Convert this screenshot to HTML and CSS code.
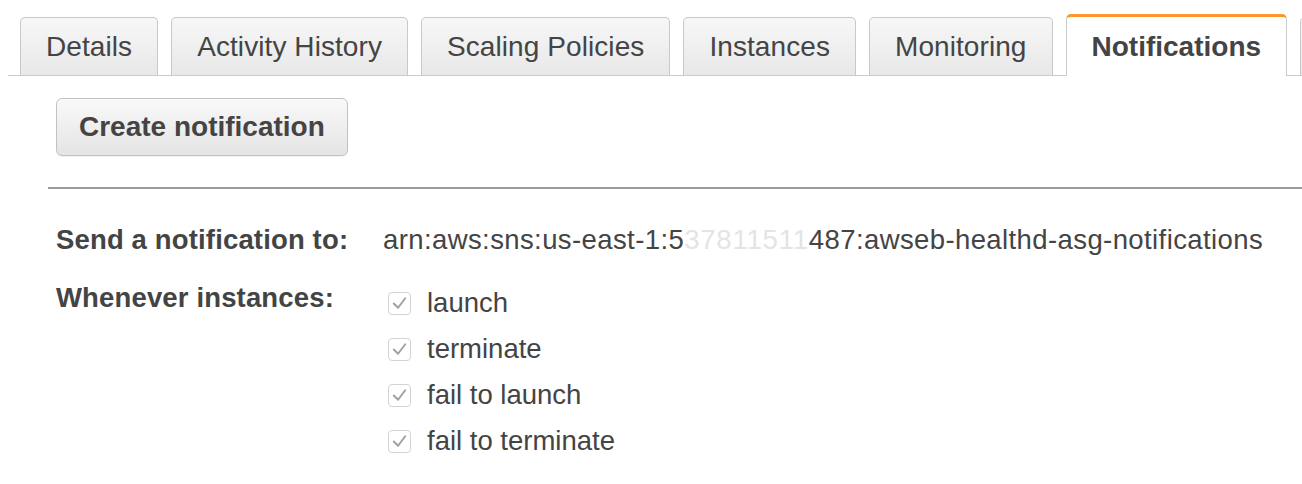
FILE: index.html
```html
<!DOCTYPE html>
<html>
<head>
<meta charset="utf-8">
<link rel="stylesheet" href="styles.css">
</head>
<body>
<div class="tabbar">
  <div class="tab">Details</div>
  <div class="tab">Activity History</div>
  <div class="tab">Scaling Policies</div>
  <div class="tab">Instances</div>
  <div class="tab">Monitoring</div>
  <div class="tab active">Notifications</div>
  <div class="tab stub"></div>
</div>
<div class="content">
  <div class="toolbar">
    <button class="btn">Create notification</button>
  </div>
  <div class="rule"></div>
  <div class="details">
    <div class="label">Send a notification to:</div>
    <div class="value">arn:aws:sns:us-east-1:5<span class="redact">37811511</span>487:awseb-healthd-asg-notifications</div>
    <div class="label">Whenever instances:</div>
    <ul class="checks">
      <li><span class="box"><svg viewBox="0 0 22 22" width="22" height="22"><path d="M5 11.5 L9.5 16 L17 6" fill="none" stroke="#a0a0a0" stroke-width="2" stroke-linecap="round" stroke-linejoin="round"/></svg></span>launch</li>
      <li><span class="box"><svg viewBox="0 0 22 22" width="22" height="22"><path d="M5 11.5 L9.5 16 L17 6" fill="none" stroke="#a0a0a0" stroke-width="2" stroke-linecap="round" stroke-linejoin="round"/></svg></span>terminate</li>
      <li><span class="box"><svg viewBox="0 0 22 22" width="22" height="22"><path d="M5 11.5 L9.5 16 L17 6" fill="none" stroke="#a0a0a0" stroke-width="2" stroke-linecap="round" stroke-linejoin="round"/></svg></span>fail to launch</li>
      <li><span class="box"><svg viewBox="0 0 22 22" width="22" height="22"><path d="M5 11.5 L9.5 16 L17 6" fill="none" stroke="#a0a0a0" stroke-width="2" stroke-linecap="round" stroke-linejoin="round"/></svg></span>fail to terminate</li>
    </ul>
  </div>
</div>
</body>
</html>
```
FILE: styles.css
```css
html, body {
  margin: 0;
  padding: 0;
  overflow: hidden;
  background: #fff;
}
body {
  font-family: "Liberation Sans", Arial, Helvetica, sans-serif;
  color: #444;
}
.tabbar {
  display: flex;
  align-items: flex-end;
  gap: 13px;
  margin: 14px 0 0 8px;
  padding-left: 12px;
  border-bottom: 1px solid #cbcbcb;
}
.tab {
  flex-shrink: 0;
  box-sizing: border-box;
  height: 58px;
  padding: 0 25px;
  display: flex;
  align-items: center;
  font-size: 28px;
  letter-spacing: 0.08px;
  color: #444;
  background: linear-gradient(#f7f7f7, #e8e8e8);
  border: 1px solid #c9c9c9;
  border-bottom: none;
  border-radius: 5px 5px 0 0;
  white-space: nowrap;
}
.tab.active {
  height: 62px;
  margin-bottom: -1px;
  padding-top: 1px;
  background: #fff;
  border-top: 3px solid #f99a26;
  border-left-color: #cbcbcb;
  border-right-color: #cbcbcb;
  font-weight: bold;
  letter-spacing: 0;
}
.tab.stub {
  width: 80px;
}
.content {
  margin-left: 48px;
}
.toolbar {
  padding: 22px 0 0 8px;
}
.btn {
  box-sizing: border-box;
  height: 58px;
  padding: 0 22px;
  font-family: inherit;
  font-size: 28px;
  font-weight: bold;
  color: #444;
  background: linear-gradient(#f9f9f9, #e4e4e4);
  border: 1px solid #c2c2c2;
  border-radius: 6px;
  box-shadow: 0 1px 1px rgba(0,0,0,0.06);
}
.rule {
  margin-top: 31px;
  border-top: 2px solid #9b9b9b;
}
.details {
  display: grid;
  grid-template-columns: 327px 1fr;
  row-gap: 12px;
  margin-top: 28px;
  padding-left: 8px;
  font-size: 27.5px;
  line-height: 46px;
}
.label {
  font-weight: bold;
  color: #444;
  letter-spacing: 0.15px;
}
.value {
  white-space: nowrap;
  letter-spacing: 0.4px;
}
.redact {
  color: #e4e4e4;
  letter-spacing: 0.8px;
}
.checks {
  list-style: none;
  margin: 5px 0 0 0;
  padding: 0;
}
.checks li {
  display: flex;
  align-items: center;
  gap: 16px;
  height: 46px;
}
.box {
  box-sizing: border-box;
  width: 23px;
  height: 23px;
  margin-left: 5px;
  border: 1px solid #d3d3d3;
  border-radius: 4px;
  display: flex;
  align-items: center;
  justify-content: center;
}
.box svg {
  display: block;
}
```
